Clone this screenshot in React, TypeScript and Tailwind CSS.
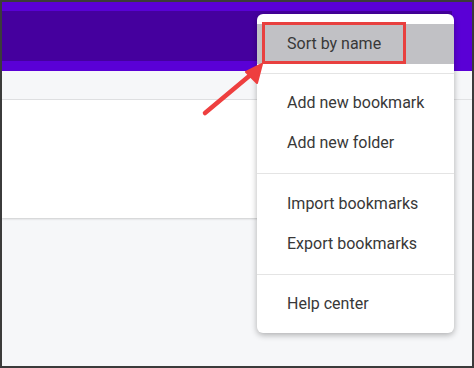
import React from 'react';

const groups: string[][] = [
  ['Sort by name'],
  ['Add new bookmark', 'Add new folder'],
  ['Import bookmarks', 'Export bookmarks'],
  ['Help center'],
];

export default function App() {
  return (
    <div
      className="relative w-[474px] h-[368px] overflow-hidden border-2 border-[#3b3b3b] bg-[#f6f7f9]"
      style={{ fontFamily: 'Roboto, "Noto Sans", Arial, sans-serif' }}
    >
      {/* Purple header */}
      <div className="h-[69px] bg-[#5a00d6] pt-[9px]">
        <div className="h-[50px] mr-[20px] bg-[#45009e]" />
      </div>

      {/* Toolbar strip */}
      <div className="h-[29px] border-b border-[#e1e2e4] bg-[#f6f7f9]" />

      {/* Card */}
      <div className="h-[118px] w-[440px] bg-white shadow-[0_1px_2px_rgba(0,0,0,0.18)]" />

      {/* Menu */}
      <div className="absolute left-[255px] top-[12px] w-[197px] rounded-[6px] bg-white shadow-[0_2px_6px_rgba(0,0,0,0.3)]">
        {groups.map((items, gi) => (
          <div
            key={gi}
            className={
              gi === 0
                ? 'pt-[10px] pb-[9px] border-b border-[#e4e4e4]'
                : gi === 1
                ? 'pt-[9px] pb-[10px] border-b border-[#e4e4e4]'
                : gi === 2
                ? 'pt-[10px] pb-[10px] border-b border-[#e4e4e4]'
                : 'pt-[9px] pb-[9px]'
            }
          >
            {items.map((label) => (
              <div
                key={label}
                className={
                  'relative h-[40px] flex items-center pl-[30px] text-[16px] text-[#383838] ' +
                  (label === 'Sort by name' ? 'bg-[#c1c1c5]' : '')
                }
              >
                {label}
                {label === 'Sort by name' && (
                  <div className="absolute left-[5px] top-[-2px] w-[144px] h-[42px] border-[3px] border-[#e8403f]" />
                )}
              </div>
            ))}
          </div>
        ))}
      </div>

      {/* Arrow */}
      <svg
        className="absolute left-0 top-0"
        width="474"
        height="368"
        viewBox="0 0 474 368"
      >
        <line x1="203" y1="111" x2="252" y2="70" stroke="#ee3f3f" strokeWidth="4.5" strokeLinecap="round" />
        <polygon points="260,62 244,70 255,81" fill="#ee3f3f" stroke="#ee3f3f" strokeWidth="2" strokeLinejoin="round" />
      </svg>
    </div>
  );
}
